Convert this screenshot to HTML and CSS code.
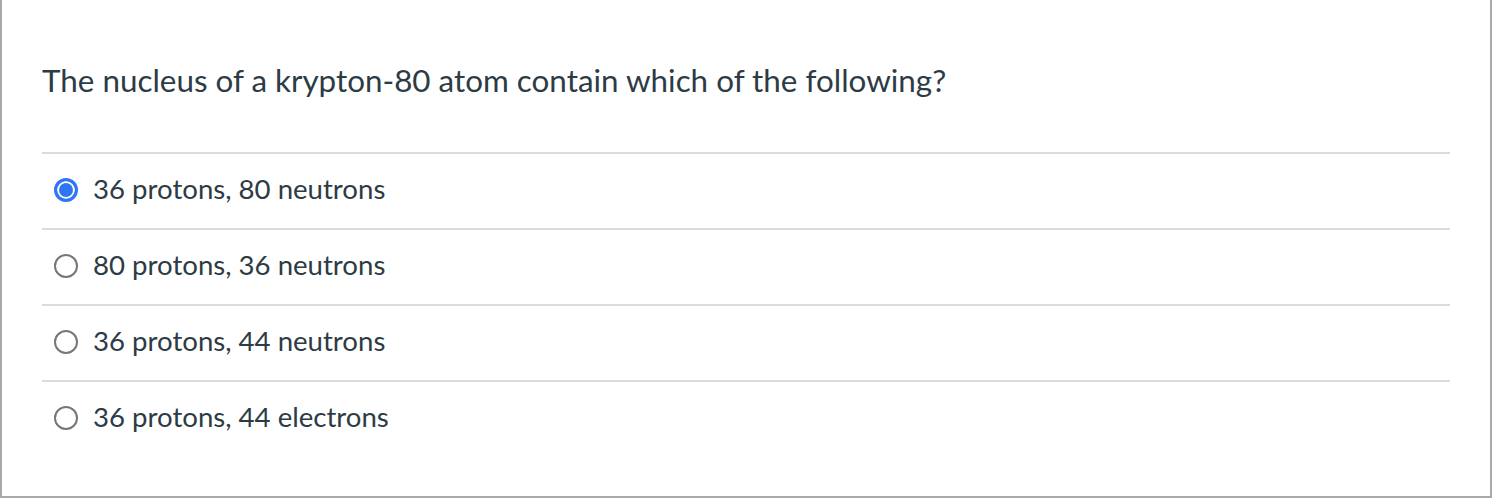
FILE: index.html
```html
<!DOCTYPE html>
<html>
<head>
<meta charset="utf-8">
<link rel="stylesheet" href="styles.css">
</head>
<body>
<div class="quiz">
  <div class="question">The nucleus of a krypton-80 atom contain which of the following?</div>
  <div class="answers">
    <label class="answer"><span class="radio checked"></span><span class="label">36 protons, 80 neutrons</span></label>
    <label class="answer"><span class="radio"></span><span class="label">80 protons, 36 neutrons</span></label>
    <label class="answer"><span class="radio"></span><span class="label">36 protons, 44 neutrons</span></label>
    <label class="answer"><span class="radio"></span><span class="label">36 protons, 44 electrons</span></label>
  </div>
</div>
</body>
</html>
```
FILE: styles.css
```css
html, body {
  margin: 0;
  padding: 0;
  background: #fff;
}
.quiz {
  box-sizing: border-box;
  width: 1492px;
  height: 498px;
  border: 2px solid #a9a9a9;
  border-top: none;
  padding: 0 40px 0 40px;
  font-family: Lato, "Open Sans", sans-serif;
  color: #2d3b45;
}
.question {
  box-sizing: border-box;
  height: 152px;
  padding-top: 60px;
  font-size: 31.4px;
  line-height: 40px;
}
.answers {
  display: flex;
  flex-direction: column;
}
.answer {
  display: flex;
  align-items: center;
  box-sizing: border-box;
  height: 76px;
  padding-bottom: 2px;
  border-top: 2px solid #dcdcdc;
}
.radio {
  box-sizing: border-box;
  width: 24px;
  height: 24px;
  margin-left: 12px;
  margin-right: 15px;
  border: 2px solid #767676;
  border-radius: 50%;
  flex: none;
}
.radio.checked {
  border: 3px solid #2f76f6;
  background: #2f76f6;
  box-shadow: inset 0 0 0 2px #fff;
}
.label {
  font-size: 27.6px;
  line-height: 30px;
  padding-bottom: 3px;
}
```
